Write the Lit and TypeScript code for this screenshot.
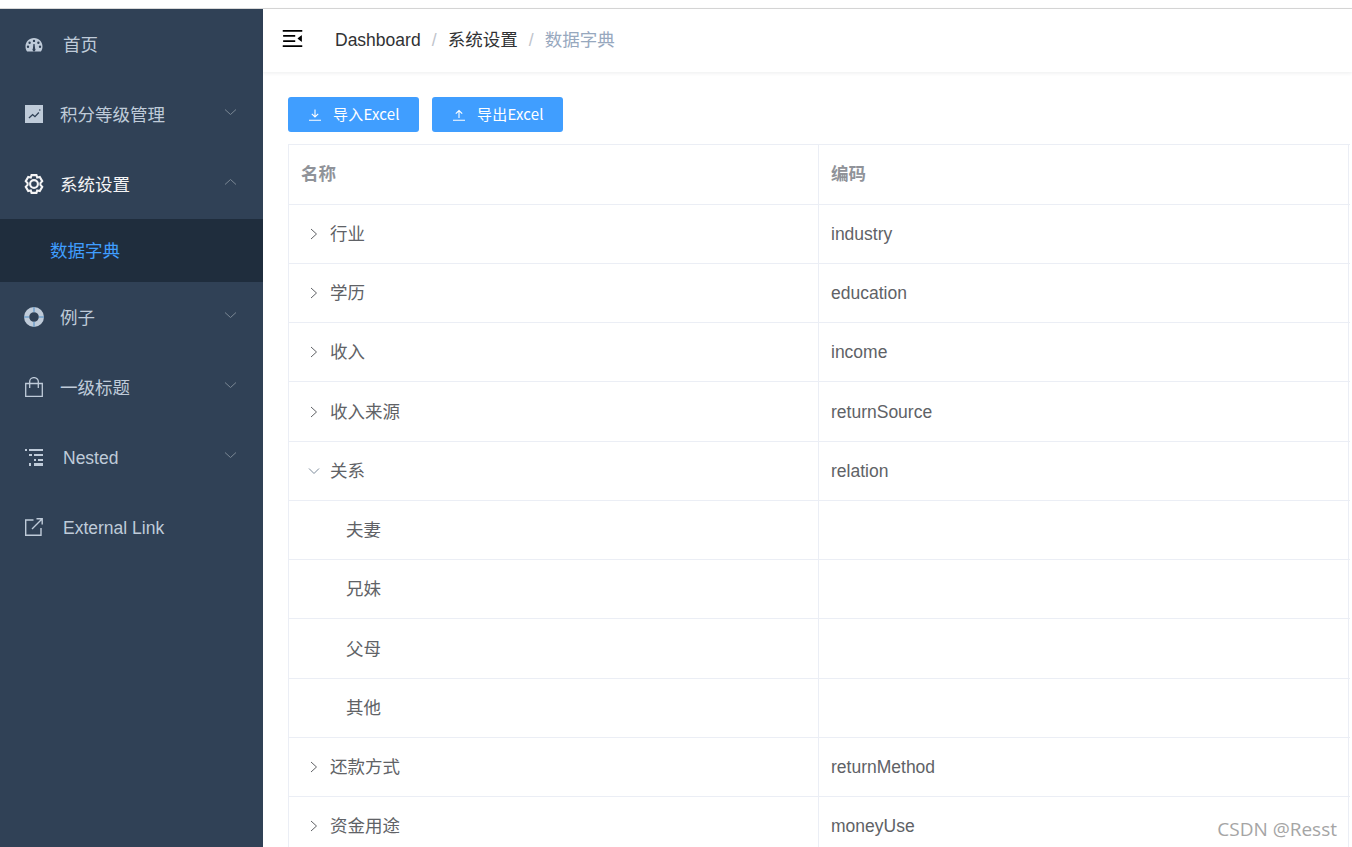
import { LitElement, html, css, svg } from "lit";
import { customElement } from "lit/decorators.js";

const chevDown = svg`<path d="M1 1.5 L6.5 6.5 L12 1.5" fill="none" stroke="currentColor" stroke-width="1"/>`;
const chevUp = svg`<path d="M1 6.5 L6.5 1.5 L12 6.5" fill="none" stroke="currentColor" stroke-width="1"/>`;

const hamburger = "M408 442h480c4.400 0 8-3.600 8-8v-56c0-4.400-3.600-8-8-8H408c-4.400 0-8 3.600-8 8v56c0 4.400 3.600 8 8 8zm-8 204c0 4.400 3.600 8 8 8h480c4.400 0 8-3.600 8-8v-56c0-4.400-3.600-8-8-8H408c-4.400 0-8 3.600-8 8v56zm504-486H120c-4.400 0-8 3.600-8 8v56c0 4.400 3.600 8 8 8h784c4.400 0 8-3.600 8-8v-56c0-4.400-3.600-8-8-8zm0 632H120c-4.400 0-8 3.600-8 8v56c0 4.400 3.600 8 8 8h784c4.400 0 8-3.600 8-8v-56c0-4.400-3.600-8-8-8zM142.400 642.100L298.700 519a8.840 8.840 0 0 0 0-13.900L142.400 381.900c-5.800-4.600-14.400-.5-14.400 6.900v246.300a8.900 8.900 0 0 0 14.400 7z";

const icons: Record<string, { box: string; body: unknown }> = {
  dash: { box: "0 -1.500 18 18", body: svg`<path fill-rule="evenodd" fill="currentColor" d="M9 1.500C4 1.500 .5 5.500 .5 10c0 2 .6 3.600 1.600 5h13.800c1-1.400 1.600-3 1.600-5 0-4.500-3.500-8.500-8.500-8.500zM9 3.200a1.200 1.200 0 1 1 0 2.400 1.200 1.200 0 0 1 0-2.400zM4.600 5a1.200 1.200 0 1 1 0 2.400 1.200 1.200 0 0 1 0-2.400zM13.400 5a1.200 1.200 0 1 1 0 2.400 1.200 1.200 0 0 1 0-2.400zM3 9a1.200 1.200 0 1 1 0 2.400A1.200 1.200 0 0 1 3 9zM15 9a1.200 1.200 0 1 1 0 2.400A1.200 1.200 0 0 1 15 9zM8.400 7.500h1.200l.5 4.600a1.500 1.500 0 1 1-2.200 0z"/>` },
  chart: { box: "0 0 18 18", body: svg`<path fill-rule="evenodd" fill="currentColor" d="M0 0h18v18H0zM3.500 12.500l.9 1 3.200-3 2.400 2 4.300-4.500-.9-.9-3.500 3.600-2.300-2z"/><circle cx="14.800" cy="5" r="0.800" fill="#304156"/>` },
  gear: { box: "0 0 18 18", body: svg`<g fill="none" stroke="currentColor" stroke-width="1.900"><path d="M6.800 1h4.400l.7 2.200 2.300-.5 2.200 3.800-1.600 1.700v1.600l1.600 1.700-2.200 3.800-2.300-.5-.7 2.200H6.800l-.7-2.200-2.300.5-2.200-3.800 1.600-1.700V8.200L1.600 6.500l2.200-3.800 2.300.5z"/><circle cx="9" cy="9" r="3.500"/></g>` },
  buoy: { box: "0 0 20 20", body: svg`<path fill-rule="evenodd" fill="currentColor" d="M10 0a10 10 0 1 1 0 20A10 10 0 0 1 10 0zM10 5.200a4.800 4.800 0 1 0 0 9.600 4.800 4.800 0 0 0 0-9.600z"/><path d="M10 0v5.200M10 14.800V20M0 10h5.200M14.800 10H20" stroke="#3f86c4" stroke-width="0.900"/>` },
  bag: { box: "0 0 18 20", body: svg`<g fill="none" stroke="currentColor" stroke-width="1.300"><path d="M.7 6.500h16.600v12.800H.7z"/><path d="M4.700 11V4.300a4.300 3.700 0 0 1 8.600 0V11"/></g>` },
  nested: { box: "0 0 18 18", body: svg`<g fill="currentColor"><rect x="0" y="1" width="2" height="2"/><rect x="4" y="1" width="14" height="2"/><rect x="4" y="6" width="3" height="2"/><rect x="9" y="6" width="9" height="2"/><rect x="9" y="11" width="2" height="2"/><rect x="13" y="11" width="5" height="2"/><rect x="4" y="15" width="2" height="3"/><rect x="9" y="15" width="9" height="3"/></g>` },
  link: { box: "0 0 18 18", body: svg`<g fill="none" stroke="currentColor" stroke-width="1.400"><path d="M8.500 2H.7v15.300h15.300V10"/><path d="M7 11L17 1M11.500 .8h5.700v5.700"/></g>` },
};

interface NavItem { icon: string; label: string; arrow?: "down" | "up"; tight?: boolean; active?: boolean; }

const topNav: NavItem[] = [
  { icon: "dash", label: "首页" },
  { icon: "chart", label: "积分等级管理", arrow: "down", tight: true },
  { icon: "gear", label: "系统设置", arrow: "up", tight: true, active: true },
];
const bottomNav: NavItem[] = [
  { icon: "buoy", label: "例子", arrow: "down", tight: true },
  { icon: "bag", label: "一级标题", arrow: "down", tight: true },
  { icon: "nested", label: "Nested", arrow: "down" },
  { icon: "link", label: "External Link" },
];

interface Row { name: string; code: string; kind: "closed" | "open" | "child"; }
const rows: Row[] = [
  { name: "行业", code: "industry", kind: "closed" },
  { name: "学历", code: "education", kind: "closed" },
  { name: "收入", code: "income", kind: "closed" },
  { name: "收入来源", code: "returnSource", kind: "closed" },
  { name: "关系", code: "relation", kind: "open" },
  { name: "夫妻", code: "", kind: "child" },
  { name: "兄妹", code: "", kind: "child" },
  { name: "父母", code: "", kind: "child" },
  { name: "其他", code: "", kind: "child" },
  { name: "还款方式", code: "returnMethod", kind: "closed" },
  { name: "资金用途", code: "moneyUse", kind: "closed" },
];

@customElement("app-root")
export class AppRoot extends LitElement {
  static styles = css`
    :host { display: block; position: relative; height: 847px; overflow: hidden; background: #fff;
      font-family: "Liberation Sans", "Noto Sans CJK SC", sans-serif; font-size: 17.5px; line-height: 20px; }
    .strip { height: 8px; background: #fff; border-bottom: 1px solid #d8d8d8; }
    .layout { display: flex; height: 838px; }
    .side { width: 263px; flex: none; background: #304156; color: #bfcbd9; }
    .item { height: 70px; display: flex; align-items: center; padding-left: 25px; box-sizing: border-box; position: relative; }
    .item span { margin-top: 2px; }
    .item .ic { width: 18px; height: 18px; flex: none; margin-right: 20px; display: block; }
    .item.tight .ic { margin-right: 17px; }
    .item .ic.buoy { width: 20px; height: 20px; margin-left: -1px; margin-right: 16px; }
    .item .ic.bag { height: 20px; }
    .item.active { color: #f4f4f5; }
    .item.active .ic { width: 20px; height: 20px; margin-left: -1px; margin-right: 16px; }
    .arrow { position: absolute; left: 224px; top: 29px; width: 13px; height: 8px; color: #7a8794; }
    .sub { height: 63px; background: #1f2d3d; color: #409eff; padding-left: 50px; display: flex; align-items: center; }
    .main { flex: 1; min-width: 0; }
    .nav { height: 63px; padding-bottom: 2px; box-sizing: border-box; display: flex; align-items: center; box-shadow: 0 1px 4px rgba(0,21,41,.08); position: relative; }
    .ham { width: 25px; height: 25px; margin-left: 17px; margin-right: 30px; margin-bottom: 2px; display: block; flex: none; }
    .crumb { color: #303133; white-space: nowrap; }
    .sep { color: #c0c4cc; margin: 0 11.1px; }
    .crumb.last { color: #97a8be; }
    .content { padding: 25px 0 0 25px; }
    .btns { display: flex; gap: 13px; margin-bottom: 12px; }
    .btn { width: 131px; height: 35px; background: #409eff; border-radius: 3px; color: #fff; font-size: 15px;
      display: flex; align-items: center; padding-left: 21px; box-sizing: border-box; }
    .btn svg { width: 12px; height: 12px; margin-right: 12px; flex: none; }
    .btn span { font-family: "Noto Sans CJK SC", sans-serif; letter-spacing: .2px; margin-bottom: 2px; }
    .table { border: 1px solid #ebeef5; border-right: 0; border-bottom: 0; width: 1061px; color: #606266; }
    .tr { display: grid; grid-template-columns: 530px 530px; height: 59.25px; box-sizing: border-box; border-bottom: 1px solid #ebeef5; }
    .tr.head { height: 59.7px; color: #909399; font-weight: 700; }
    .td { display: flex; align-items: center; padding-left: 12px; box-sizing: border-box; border-right: 1px solid #ebeef5; white-space: nowrap; }
    .caret { width: 10px; height: 12px; margin-left: 8px; margin-right: 11px; flex: none; color: #606266; }
    .caret.open { width: 12px; height: 8px; margin-left: 7px; margin-right: 10px; color: #7b8a9a; }
    .td.child { padding-left: 57px; }
    .mark { position: absolute; right: 15px; top: 817px; color: #a5a5a5; font-family: "Open Sans", sans-serif; font-size: 19px; line-height: 24px; }
  `;

  private nav(n: NavItem) {
    const ic = icons[n.icon];
    return html`<div class="item ${n.tight ? "tight" : ""} ${n.active ? "active" : ""}">
      <svg class="ic ${n.icon}" viewBox=${ic.box}>${ic.body}</svg>
      <span>${n.label}</span>
      ${n.arrow ? html`<svg class="arrow" viewBox="0 0 13 8">${n.arrow === "up" ? chevUp : chevDown}</svg>` : ""}
    </div>`;
  }

  render() {
    return html`
      <div class="strip"></div>
      <div class="layout">
        <aside class="side">
          ${topNav.map((n) => this.nav(n))}
          <div class="sub">数据字典</div>
          ${bottomNav.map((n) => this.nav(n))}
        </aside>
        <div class="main">
          <div class="nav">
            <svg class="ham" viewBox="0 0 1024 1024"><g transform="rotate(180 512 512)"><path fill="#000" d=${hamburger}/></g></svg>
            <span class="crumb">Dashboard</span><span class="sep">/</span>
            <span class="crumb">系统设置</span><span class="sep">/</span>
            <span class="crumb last">数据字典</span>
          </div>
          <div class="content">
            <div class="btns">
              <div class="btn"><svg viewBox="0 0 12 12"><path d="M6 .5v7M2.800 4.800L6 8l3.200-3.200M0 11.300h12" fill="none" stroke="#fff" stroke-width="1.100"/></svg><span>导入Excel</span></div>
              <div class="btn"><svg viewBox="0 0 12 12"><path d="M6 9V2M2.800 4.700L6 1.500l3.200 3.200M0 11.300h12" fill="none" stroke="#fff" stroke-width="1.100"/></svg><span>导出Excel</span></div>
            </div>
            <div class="table">
              <div class="tr head"><div class="td">名称</div><div class="td">编码</div></div>
              ${rows.map((r) => html`<div class="tr">
                <div class="td ${r.kind === "child" ? "child" : ""}">
                  ${r.kind === "closed" ? html`<svg class="caret" viewBox="0 0 10 12"><path d="M2 1l5.500 5L2 11" fill="none" stroke="currentColor" stroke-width="1"/></svg>` : ""}
                  ${r.kind === "open" ? html`<svg class="caret open" viewBox="0 0 12 8"><path d="M1 1.500l5 5 5-5" fill="none" stroke="currentColor" stroke-width="1"/></svg>` : ""}
                  ${r.name}
                </div>
                <div class="td">${r.code}</div>
              </div>`)}
            </div>
          </div>
        </div>
      </div>
      <div class="mark">CSDN @Resst</div>
    `;
  }
}
